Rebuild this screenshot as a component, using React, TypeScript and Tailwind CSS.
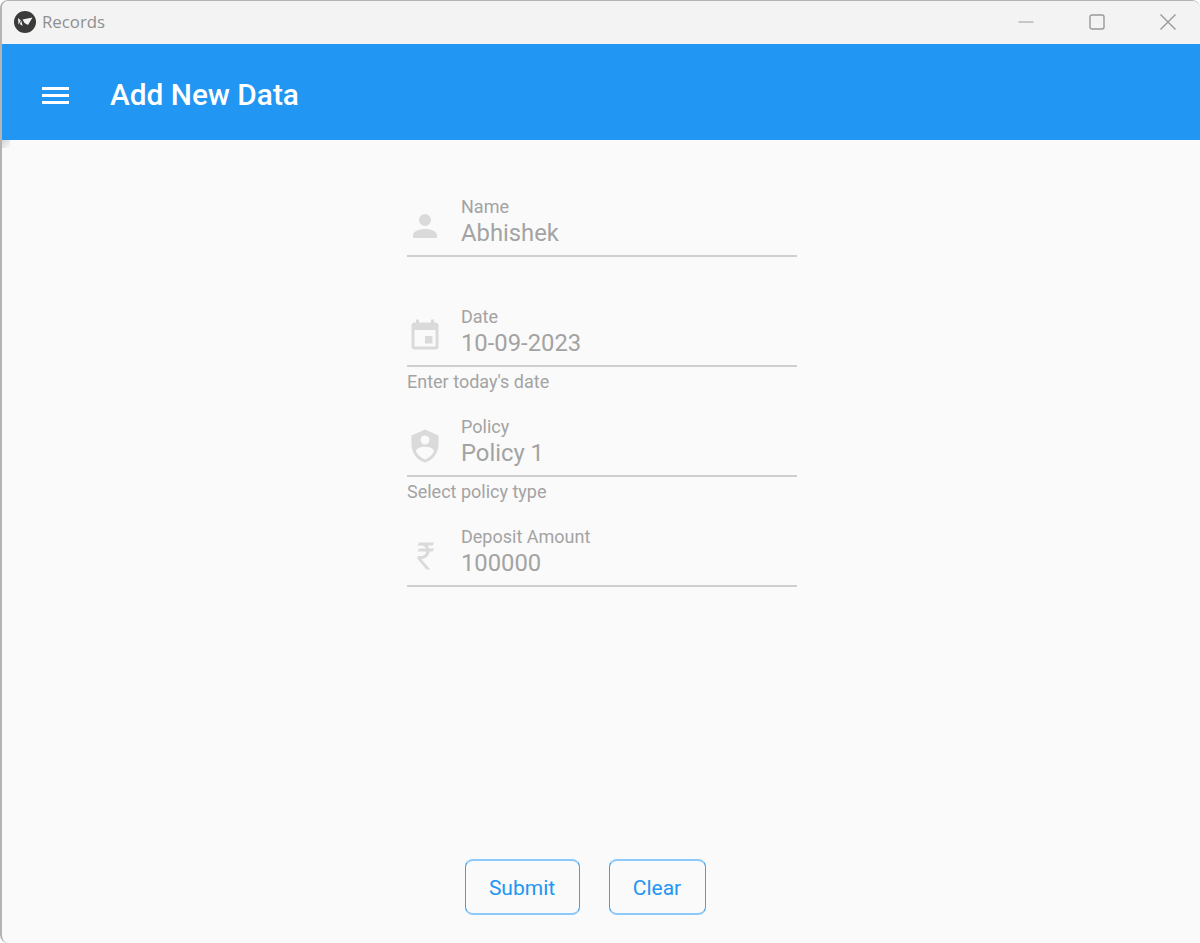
const fields = [
  {
    label: "Name",
    value: "Abhishek",
    helper: "",
    icon: "M12,4A4,4 0 0,1 16,8A4,4 0 0,1 12,12A4,4 0 0,1 8,8A4,4 0 0,1 12,4M12,14C16.42,14 20,15.79 20,18V20H4V18C4,15.79 7.58,14 12,14Z",
  },
  {
    label: "Date",
    value: "10-09-2023",
    helper: "Enter today's date",
    icon: "M19,19H5V8H19M16,1V3H8V1H6V3H5C3.89,3 3,3.89 3,5V19A2,2 0 0,0 5,21H19A2,2 0 0,0 21,19V5C21,3.89 20.1,3 19,3H18V1M17,12H12V17H17V12Z",
  },
  {
    label: "Policy",
    value: "Policy 1",
    helper: "Select policy type",
    icon: "M12,1L3,5V11C3,16.55 6.84,21.74 12,23C17.16,21.74 21,16.55 21,11V5L12,1M12,5A3,3 0 0,1 15,8A3,3 0 0,1 12,11A3,3 0 0,1 9,8A3,3 0 0,1 12,5M17.13,17C15.92,18.85 14.11,20.24 12,20.92C9.89,20.24 8.08,18.85 6.87,17C6.53,16.5 6.24,16 6,15.47C6,13.82 8.71,12.47 12,12.47C15.29,12.47 18,13.79 18,15.47C17.76,16 17.47,16.5 17.13,17Z",
  },
  {
    label: "Deposit Amount",
    value: "100000",
    helper: "",
    icon: "M8,3H18L17,5H13.74C14.22,5.58 14.58,6.26 14.79,7H18L17,9H15C14.75,11.57 12.74,13.63 10.2,13.96V14H9.5L15.5,21H13L7,14V12H9.5V12C11.26,12 12.72,10.7 12.96,9H7L8,7H12.66C12.1,5.82 10.9,5 9.5,5H7L8,3Z",
  },
];

function Field({ label, value, helper, icon }: (typeof fields)[number]) {
  return (
    <div className="h-[110px] w-[390px]">
      <div className="flex h-[64px] items-start gap-[18px] border-b-2 border-[#cfcfcf] pt-[2px]">
        <svg viewBox="0 0 24 24" className="mt-[13px] h-9 w-9 shrink-0 fill-[#dadada]">
          <path d={icon} />
        </svg>
        <div className="flex flex-col">
          <span className="h-[24px] text-lg leading-[24px] text-[#a3a3a3]">{label}</span>
          <span className="h-[28px] text-[23.8px] leading-[28px] text-[#a3a3a3]">{value}</span>
        </div>
      </div>
      {helper ? <p className="mt-[5px] text-lg leading-5 text-[#a3a3a3]">{helper}</p> : null}
    </div>
  );
}

export default function App() {
  return (
    <div className="flex h-[943px] w-[1200px] flex-col overflow-hidden rounded-t-[8px] rounded-bl-[8px] border-t border-l-2 border-[#b4b4b4] bg-[#fafafa] font-['Roboto',sans-serif]">
      <div className="flex h-[43px] shrink-0 items-center justify-between bg-[#f3f3f3] pb-[2px]">
        <div className="flex items-center gap-[6px] pl-3">
          <svg viewBox="0 0 22 22" className="h-[22px] w-[22px]">
            <circle cx="11" cy="11" r="11" fill="#3a3a3a" />
            <path d="M4 7L6.8 9.5L4.5 13.5Z" fill="#f3f3f3" />
            <path d="M7.3 9.8L8.6 15L5.8 13Z" fill="#f3f3f3" />
            <path d="M8.5 8.5L18.5 6.5L14 14L10.5 12Z" fill="#f3f3f3" />
          </svg>
          <span className="font-['Open_Sans',sans-serif] text-[16.8px] text-[#8f8f8f]">Records</span>
        </div>
        <div className="flex items-center gap-[55px] pr-[24px]">
          <svg viewBox="0 0 16 16" className="h-4 w-4 fill-none stroke-[#999999]">
            <path d="M0.5 8H15.5" />
          </svg>
          <svg viewBox="0 0 16 16" className="h-4 w-4 fill-none stroke-[#999999] stroke-[1.4]">
            <rect x="1" y="1" width="14" height="14" rx="2" />
          </svg>
          <svg viewBox="0 0 16 16" className="h-4 w-4 fill-none stroke-[#999999] stroke-[1.4]">
            <path d="M0.5 0.5L15.5 15.5M15.5 0.5L0.5 15.5" />
          </svg>
        </div>
      </div>

      <header className="flex h-[96px] shrink-0 items-center bg-[#2196f3] pt-[6px] pl-[40px] text-white">
        <div className="flex w-[68px] flex-col gap-[4px]">
          <span className="h-[3px] w-[27px] bg-white" />
          <span className="h-[3px] w-[27px] bg-white" />
          <span className="h-[3px] w-[27px] bg-white" />
        </div>
        <h1 className="text-[29.8px] font-medium leading-none">Add New Data</h1>
      </header>

      <main className="relative flex flex-1 flex-col items-center pt-[53px]">
        <div className="absolute top-0 left-0 h-2 w-2 bg-gradient-to-br from-[#d4d4d4] to-transparent" />
        <div className="ml-[2px] flex flex-col">
          {fields.map((f) => (
            <Field key={f.label} {...f} />
          ))}
        </div>
        <div className="mt-auto mb-[28px] ml-[-32px] flex gap-[29px]">
          <button className="h-[56px] w-[115px] rounded-[8px] border border-y-2 border-[#3d9fef] border-y-[#8cc8f8] pt-[3px] text-[21px] text-[#2196f3]">
            Submit
          </button>
          <button className="h-[56px] w-[97px] rounded-[8px] border border-y-2 border-[#3d9fef] border-y-[#8cc8f8] pt-[3px] text-[21px] text-[#2196f3]">
            Clear
          </button>
        </div>
      </main>
    </div>
  );
}
